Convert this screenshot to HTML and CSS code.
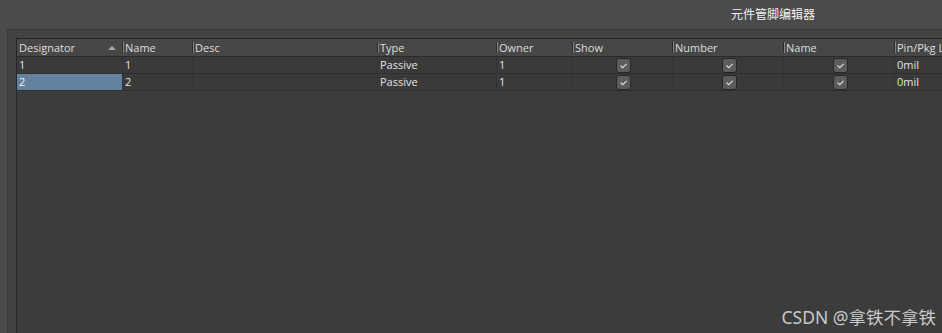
FILE: index.html
```html
<!DOCTYPE html>
<html lang="zh-CN">
<head>
  <meta charset="UTF-8">
  <title>元件管脚编辑器</title>
  <link rel="stylesheet" href="styles.css">
</head>
<body>
  <div class="window">
    <div class="titlebar">元件管脚编辑器</div>

    <div class="panel">
      <div class="grid">
        <div class="row head">
          <div class="cell sort">Designator<span class="arrow"></span></div>
          <div class="cell">Name</div>
          <div class="cell">Desc</div>
          <div class="cell">Type</div>
          <div class="cell">Owner</div>
          <div class="cell">Show</div>
          <div class="cell">Number</div>
          <div class="cell">Name</div>
          <div class="cell">Pin/Pkg Length</div>
        </div>

        <div class="row">
          <div class="cell">1</div>
          <div class="cell">1</div>
          <div class="cell"></div>
          <div class="cell">Passive</div>
          <div class="cell">1</div>
          <div class="cell check"><span class="box"><svg viewBox="0 0 13 13"><path d="M3.5 6.5 L5.8 8.6 L9.6 4.8"/></svg></span></div>
          <div class="cell check"><span class="box"><svg viewBox="0 0 13 13"><path d="M3.5 6.5 L5.8 8.6 L9.6 4.8"/></svg></span></div>
          <div class="cell check"><span class="box"><svg viewBox="0 0 13 13"><path d="M3.5 6.5 L5.8 8.6 L9.6 4.8"/></svg></span></div>
          <div class="cell">0mil</div>
        </div>

        <div class="row">
          <div class="cell selected">2</div>
          <div class="cell">2</div>
          <div class="cell"></div>
          <div class="cell">Passive</div>
          <div class="cell">1</div>
          <div class="cell check"><span class="box"><svg viewBox="0 0 13 13"><path d="M3.5 6.5 L5.8 8.6 L9.6 4.8"/></svg></span></div>
          <div class="cell check"><span class="box"><svg viewBox="0 0 13 13"><path d="M3.5 6.5 L5.8 8.6 L9.6 4.8"/></svg></span></div>
          <div class="cell check"><span class="box"><svg viewBox="0 0 13 13"><path d="M3.5 6.5 L5.8 8.6 L9.6 4.8"/></svg></span></div>
          <div class="cell">0mil</div>
        </div>
      </div>
    </div>

    <div class="watermark">CSDN @拿铁不拿铁</div>
  </div>
</body>
</html>
```

FILE: styles.css
```css
html, body {
  margin: 0;
  height: 100%;
  overflow: hidden;
}
body {
  background: #4b4b4b;
  font-family: "Open Sans", "Noto Sans", "Noto Sans CJK SC", sans-serif;
  font-size: 11px;
  color: #e2e2e2;
}
.window {
  position: relative;
  height: 333px;
  display: flex;
  flex-direction: column;
}
.titlebar {
  height: 29px;
  line-height: 27px;
  padding-left: 731px;
  font-family: "Noto Sans CJK SC", sans-serif;
  font-size: 12px;
  color: #f2f2f2;
  flex-shrink: 0;
}
.panel {
  flex: 1;
  margin-left: 7px;
  border-top: 1px solid #3a3a3a;
  border-left: 1px solid #3a3a3a;
  background: #424242;
  padding: 8px 0 0 8px;
  display: flex;
}
.grid {
  flex: 1;
  background: #3c3c3c;
  border-top: 1px solid #272727;
  border-left: 1px solid #272727;
  overflow: hidden;
}
.row {
  display: grid;
  grid-template-columns: 105px 70px 185px 119px 76px 100px 111px 111px 140px;
  height: 16px;
  border-bottom: 1px solid #2f2f2f;
  background: #3a3a3a;
}
.row .cell {
  line-height: 16px;
  padding-left: 2px;
  white-space: nowrap;
  overflow: hidden;
}
.row .cell + .cell {
  border-left: 1px solid #333333;
}

/* header row */
.head {
  height: 17px;
  background: #474747;
  border-bottom: 1px solid #2a2a2a;
}
.head .cell {
  line-height: 17px;
  color: #dedede;
}
.row.head .cell + .cell {
  border-left: none;
  padding-left: 3px;
  background:
    linear-gradient(#2a2a2a, #2a2a2a) 0 center / 1px 11px no-repeat,
    linear-gradient(#858585, #858585) 1px center / 1px 11px no-repeat;
}
.sort {
  display: flex;
  justify-content: space-between;
  align-items: center;
  padding-right: 6px;
}
.arrow {
  width: 0;
  height: 0;
  border-left: 4px solid transparent;
  border-right: 4px solid transparent;
  border-bottom: 4px solid #a8a8a8;
}
.selected {
  background: #64819f;
  color: #f4f4f4;
}

/* checkboxes */
.check {
  display: flex;
  justify-content: center;
  align-items: center;
}
.box {
  width: 13px;
  height: 13px;
  border: 1px solid #262626;
  border-radius: 3px;
  background: #5c5c5c;
  display: flex;
}
.box svg {
  width: 13px;
  height: 13px;
}
.box path {
  fill: none;
  stroke: #dadada;
  stroke-width: 1.2;
}
.watermark {
  position: absolute;
  right: 6px;
  bottom: 4px;
  font-family: "Noto Sans", "Noto Sans CJK SC", sans-serif;
  font-size: 17.5px;
  color: #c9c9c9;
}
```
